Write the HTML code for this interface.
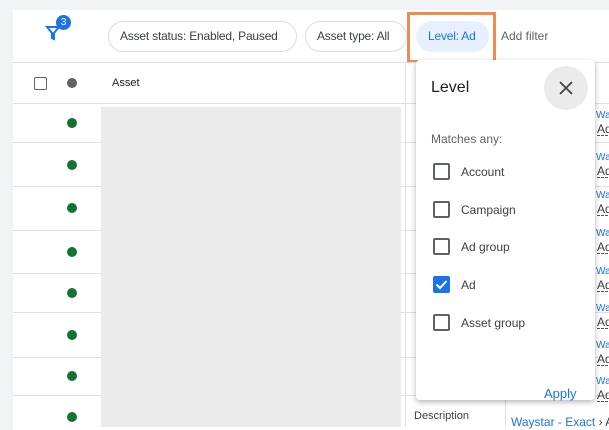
<!DOCTYPE html>
<html><head><style>
*{margin:0;padding:0;box-sizing:border-box}
body{width:609px;height:427px;overflow:hidden;background:#f1f3f4;font-family:"Liberation Sans",Arial,sans-serif;position:relative}
.card{position:absolute;left:13px;top:10px;width:600px;height:420px;background:#fff}
.abs{position:absolute}
.chip{position:absolute;top:21px;height:31px;border:1px solid #dadce0;border-radius:16px;font-size:12px;color:#3c4043;line-height:29px;padding:0 11px;white-space:nowrap;letter-spacing:-0.2px}
.hl{position:absolute;left:13px;width:596px;height:1px;background:#e0e0e0}
.dot{position:absolute;left:67px;width:10px;height:10px;border-radius:50%;background:#137333}
.wa{position:absolute;left:596px;font-size:10px;color:#1a73e8}
.ad{position:absolute;left:597px;font-size:12px;color:#3c4043;border-bottom:1px dashed #555;line-height:12px}
.cb{position:absolute;left:433px;width:17px;height:17px;border:2px solid #5f6368;border-radius:2px}
.lbl{position:absolute;left:461px;font-size:12px;color:#3c4043}
</style></head><body>
<div class="card"></div>
<svg class="abs" style="left:45px;top:22px" width="16" height="20" viewBox="0 0 16 20"><path d="M2 5h12l-5 6v6l-2-1v-5z" fill="none" stroke="#1a73e8" stroke-width="2"/></svg>
<div class="abs" style="left:56px;top:15px;width:15px;height:15px;border-radius:50%;background:#1a73e8;color:#fff;font-size:10px;text-align:center;line-height:15px">3</div>
<div class="chip" style="left:108px;width:189px">Asset status: Enabled, Paused</div>
<div class="chip" style="left:305px;width:102px">Asset type: All</div>
<div class="chip" style="left:416px;width:73px;border:none;background:#e8f0fe;color:#1a73e8;line-height:31px;padding-left:12px">Level: Ad</div>
<div class="abs" style="left:501px;top:29px;font-size:12px;color:#5f6368">Add filter</div>
<div class="abs" style="left:407px;top:12px;width:89px;height:51px;border:3px solid #f28b50"></div>
<div class="hl" style="top:62px"></div>
<div class="abs" style="left:34px;top:77px;width:13px;height:13px;border:1.5px solid #5f6368;border-radius:2px"></div>
<div class="abs" style="left:67px;top:78px;width:10px;height:10px;border-radius:50%;background:#5f6368"></div>
<div class="abs" style="left:112px;top:77px;font-size:11px;color:#202124">Asset</div>
<div class="hl" style="top:103px"></div>
<div class="hl" style="top:142px"></div>
<div class="hl" style="top:186px"></div>
<div class="hl" style="top:230px"></div>
<div class="hl" style="top:273px"></div>
<div class="hl" style="top:312px"></div>
<div class="hl" style="top:357px"></div>
<div class="hl" style="top:395px"></div>
<div class="abs" style="left:101px;top:107px;width:300px;height:320px;background:#ebebeb"></div>
<div class="abs" style="left:405px;top:62px;width:1px;height:365px;background:#e0e0e0"></div>
<div class="dot" style="top:118px"></div><div class="dot" style="top:160px"></div><div class="dot" style="top:203px"></div><div class="dot" style="top:247px"></div><div class="dot" style="top:288px"></div><div class="dot" style="top:330px"></div><div class="dot" style="top:371px"></div><div class="dot" style="top:412px"></div>
<div class="abs" style="left:414px;top:410px;font-size:11px;color:#3c4043">Description</div>
<div class="abs" style="left:505px;top:62px;width:1px;height:365px;background:#e0e0e0"></div>
<div class="wa" style="top:110px">Wa</div><div class="ad" style="top:123px">Ad</div>
<div class="wa" style="top:152px">Wa</div><div class="ad" style="top:165px">Ad</div>
<div class="wa" style="top:190px">Wa</div><div class="ad" style="top:203px">Ad</div>
<div class="wa" style="top:228px">Wa</div><div class="ad" style="top:241px">Ad</div>
<div class="wa" style="top:266px">Wa</div><div class="ad" style="top:279px">Ad</div>
<div class="wa" style="top:303px">Wa</div><div class="ad" style="top:316px">Ad</div>
<div class="wa" style="top:340px">Wa</div><div class="ad" style="top:353px">Ad</div>
<div class="wa" style="top:376px">Wa</div><div class="ad" style="top:389px">Ad</div>
<div class="abs" style="left:511px;top:415px;font-size:12px;color:#1a73e8;white-space:nowrap">Waystar - Exact <span style="color:#3c4043">› Ac</span></div>
<div class="abs" style="left:416px;top:60px;width:179px;height:340px;background:#fff;border-radius:4px;box-shadow:0 2px 6px rgba(0,0,0,.3)"></div>
<div class="abs" style="left:431px;top:79px;font-size:16px;color:#202124">Level</div>
<div class="abs" style="left:544px;top:66px;width:44px;height:44px;border-radius:50%;background:#ebebeb"></div>
<svg class="abs" style="left:558px;top:80px" width="16" height="16" viewBox="0 0 16 16"><path d="M2 2L14 14M14 2L2 14" stroke="#444" stroke-width="1.8"/></svg>
<div class="abs" style="left:431px;top:132px;font-size:12px;color:#5f6368">Matches any:</div>
<div class="cb" style="top:163px"></div><div class="lbl" style="top:165px">Account</div>
<div class="cb" style="top:201px"></div><div class="lbl" style="top:203px">Campaign</div>
<div class="cb" style="top:238px"></div><div class="lbl" style="top:240px">Ad group</div>
<div class="cb" style="top:276px;background:#1a73e8;border-color:#1a73e8"></div>
<svg class="abs" style="left:435px;top:279px" width="13" height="11" viewBox="0 0 13 11"><path d="M1.5 5.5L5 9L11.5 2" fill="none" stroke="#fff" stroke-width="2"/></svg>
<div class="lbl" style="top:278px">Ad</div>
<div class="cb" style="top:314px"></div><div class="lbl" style="top:316px">Asset group</div>
<div class="abs" style="left:544px;top:386px;font-size:13px;color:#1a73e8">Apply</div>
</body></html>
